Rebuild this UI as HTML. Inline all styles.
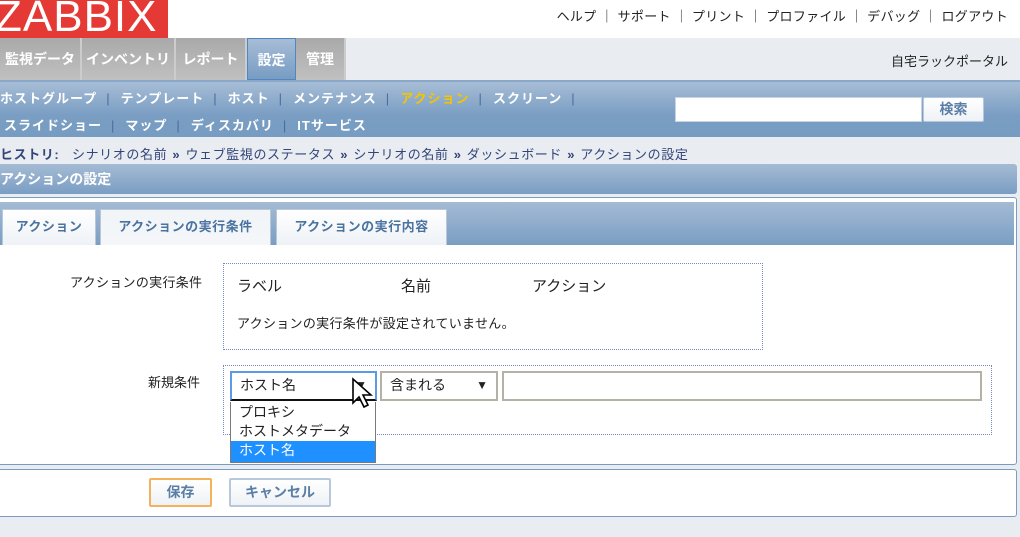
<!DOCTYPE html>
<html><head><meta charset="utf-8"><style>
*{margin:0;padding:0;box-sizing:border-box}
body{width:1020px;height:537px;overflow:hidden;background:#e9edf1;font-family:"Liberation Sans","Noto Sans CJK JP",sans-serif;font-size:13px;color:#222;position:relative}
.a{position:absolute}
.logo{left:0;top:0;width:168px;height:38px;background:#e53935;color:#fff;font-size:44px;line-height:34px;letter-spacing:1px;overflow:hidden;text-indent:-5px}
.topw{left:168px;top:0;width:852px;height:38px;background:#fff}
.toplinks{right:12px;top:6px;font-size:13px;letter-spacing:0.3px}
.mt{top:38px;height:42px;background:linear-gradient(#a9a9a9,#c0c0c0);color:#fff;font-weight:bold;font-size:14px;line-height:42px;text-align:center;border-right:2px solid #ccc}
.sub{left:0;top:80px;width:1020px;height:57px;background:linear-gradient(#a7bdd6,#7a9ec3 60%,#779cc1);border-top:2px solid #8aa9c9}
.sm{color:#fff;font-weight:bold;font-size:13px;letter-spacing:1px}
.sep{color:#4b6a9e;font-weight:normal;padding:0 10px 0 9px}
.bc{top:144px;left:0;font-size:13px;color:#33457a;letter-spacing:0.6px}
.bc b{padding:0 1px}
.hb{left:0;top:164px;width:1017px;height:30px;background:linear-gradient(#a5bbd4,#7a9ec3);color:#fff;font-weight:bold;font-size:14px;line-height:30px;border-radius:0 3px 3px 0}
.panel{left:-2px;top:197px;width:1019px;height:268px;background:#fff;border:1px solid #7b9cc0;border-radius:3px}
.ts{left:0;top:202px;width:1014px;height:43px;background:linear-gradient(#a5bbd4,#7a9ec3)}
.tab{top:209px;height:36px;background:linear-gradient(#fff,#eef2f6);border:1px solid #b8c8da;border-bottom:none;color:#4b73a0;font-weight:bold;font-size:13px;line-height:34px;text-align:center;letter-spacing:0.5px}
.dot{border:1px dotted #7a86c0}
.sel{border:2px solid #b5b1a5;background:#fff;font-size:14px;line-height:25px;padding-left:8px}
.btn{height:29px;border:2px solid #b7c7dc;background:linear-gradient(#fff,#eef2f6);color:#5a7ea6;font-weight:bold;font-size:14px;line-height:25px;text-align:center;border-radius:2px}
</style></head><body>
<div class="a topw"></div>
<div class="a logo">ZABBIX</div>
<div class="a toplinks">ヘルプ ｜ サポート ｜ プリント ｜ プロファイル ｜ デバッグ ｜ ログアウト</div>
<div class="a mt" style="left:0;width:82px">監視データ</div>
<div class="a mt" style="left:82px;width:94px">インベントリ</div>
<div class="a mt" style="left:176px;width:71px">レポート</div>
<div class="a mt" style="left:247px;width:49px;background:linear-gradient(#a6bdd6,#789cc3);border:1px solid #4f87c0">設定</div>
<div class="a mt" style="left:296px;width:50px">管理</div>
<div class="a" style="right:12px;top:51px;font-size:13px">自宅ラックポータル</div>
<div class="a sub"></div>
<div class="a sm" style="left:0;top:88px">ホストグループ<span class="sep">|</span>テンプレート<span class="sep">|</span>ホスト<span class="sep">|</span>メンテナンス<span class="sep">|</span><span style="color:#f5c400">アクション</span><span class="sep">|</span>スクリーン<span class="sep">|</span></div>
<div class="a sm" style="left:4px;top:115px">スライドショー<span class="sep">|</span>マップ<span class="sep">|</span>ディスカバリ<span class="sep">|</span>ITサービス</div>
<div class="a" style="left:675px;top:97px;width:247px;height:25px;background:#fff;border:1px solid #c8d4e2"></div>
<div class="a btn" style="left:923px;top:97px;width:61px;height:25px;border-width:1px;line-height:23px">検索</div>
<div class="a bc"><span style="font-weight:bold">ヒストリ:</span>&nbsp;&nbsp;&nbsp;シナリオの名前 <b>»</b> ウェブ監視のステータス <b>»</b> シナリオの名前 <b>»</b> ダッシュボード <b>»</b> アクションの設定</div>
<div class="a hb">アクションの設定</div>
<div class="a panel"></div>
<div class="a ts"></div>
<div class="a tab" style="left:2px;width:94px">アクション</div>
<div class="a tab" style="left:100px;width:171px;background:linear-gradient(#f2f5f8,#f4f6f9)">アクションの実行条件</div>
<div class="a tab" style="left:276px;width:171px">アクションの実行内容</div>
<div class="a" style="left:70px;top:272px;font-size:13px;letter-spacing:0.3px">アクションの実行条件</div>
<div class="a dot" style="left:223px;top:263px;width:540px;height:87px"></div>
<div class="a" style="left:237px;top:275px;font-size:15px">ラベル</div>
<div class="a" style="left:401px;top:275px;font-size:15px">名前</div>
<div class="a" style="left:532px;top:275px;font-size:15px">アクション</div>
<div class="a" style="left:237px;top:313px;font-size:13px;letter-spacing:0.3px">アクションの実行条件が設定されていません。</div>
<div class="a" style="left:148px;top:372px;font-size:13px">新規条件</div>
<div class="a dot" style="left:223px;top:365px;width:769px;height:70px"></div>
<div class="a sel" style="left:230px;top:371px;width:147px;height:30px;border-color:#5b9be6;border-bottom:2px solid #111">ホスト名<span style="position:absolute;right:8px;font-size:12px">▼</span></div>
<div class="a sel" style="left:380px;top:371px;width:118px;height:30px">含まれる<span style="position:absolute;right:8px;font-size:12px">▼</span></div>
<div class="a sel" style="left:502px;top:371px;width:480px;height:30px"></div>
<div class="a" style="left:230px;top:402px;width:146px;height:61px;background:#fff;border:1px solid #7a7a7a;border-top:none;font-size:14px;line-height:19px;padding-top:1px">
<div style="padding-left:8px">プロキシ</div><div style="padding-left:8px">ホストメタデータ</div><div style="padding-left:8px;background:#1e90ff;color:#fff;height:21px">ホスト名</div></div>
<svg class="a" style="left:351px;top:377px" width="22" height="34" viewBox="0 0 11 17"><path d="M1 1 L1 13 L4 10 L6.5 15 L8.5 14 L6 9 L10 9 Z" fill="#fff" stroke="#000" stroke-width="0.8"/></svg>
<div class="a" style="left:-2px;top:469px;width:1019px;height:48px;background:#fff;border:1px solid #7b9cc0;border-radius:3px"></div>
<div class="a btn" style="left:149px;top:478px;width:63px;border-color:#f5b25b">保存</div>
<div class="a btn" style="left:229px;top:478px;width:102px">キャンセル</div>
</body></html>
